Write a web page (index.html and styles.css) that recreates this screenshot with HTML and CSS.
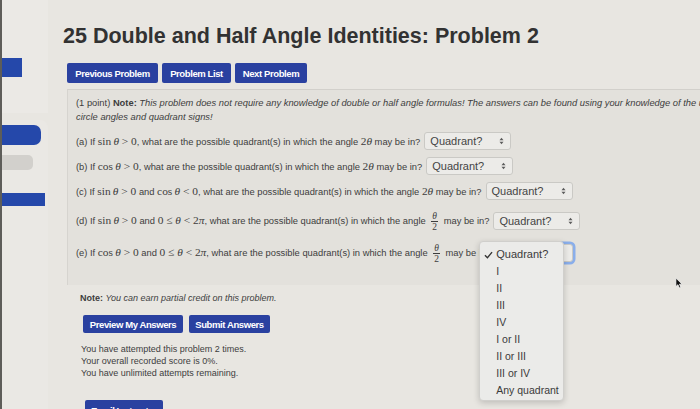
FILE: index.html
```html
<!DOCTYPE html>
<html lang="en">
<head>
<meta charset="utf-8">
<title>25 Double and Half Angle Identities: Problem 2</title>
<link rel="stylesheet" href="styles.css">
</head>
<body>
<div class="page">
  <aside class="sidebar">
    <div class="side-top"><div class="sbar blue s1"></div></div>
    <div class="side-panel">
      <div class="sbar blue s2"></div>
      <div class="sbar gray s3"></div>
      <div class="sbar blue s4"></div>
    </div>
  </aside>
  <main class="main">
    <h1 class="title">25 Double and Half Angle Identities: Problem 2</h1>
    <nav class="nav">
      <a class="btn b-prev">Previous Problem</a>
      <a class="btn b-list">Problem List</a>
      <a class="btn b-next">Next Problem</a>
    </nav>
    <section class="problem">
      <p class="intro">(1 point) <b>Note:</b> <i>This problem does not require any knowledge of double or half angle formulas! The answers can be found using your knowledge of the unit<br>circle angles and quadrant signs!</i></p>

      <div class="q"><span class="qt">(a) If <span class="m">sin&#8201;<i>θ</i> &gt; 0</span>, what are the possible quadrant(s) in which the angle <span class="m">2<i>θ</i></span> may be in?</span><span class="sel"><span>Quadrant?</span><svg class="arr" viewBox="0 0 6 10" width="5" height="8"><polygon points="0.5,4 3,0.8 5.5,4" /><polygon points="0.5,6 3,9.2 5.5,6" /></svg></span></div>

      <div class="q"><span class="qt">(b) If <span class="m">cos&#8201;<i>θ</i> &gt; 0</span>, what are the possible quadrant(s) in which the angle <span class="m">2<i>θ</i></span> may be in?</span><span class="sel"><span>Quadrant?</span><svg class="arr" viewBox="0 0 6 10" width="5" height="8"><polygon points="0.5,4 3,0.8 5.5,4" /><polygon points="0.5,6 3,9.2 5.5,6" /></svg></span></div>

      <div class="q"><span class="qt">(c) If <span class="m">sin&#8201;<i>θ</i> &gt; 0</span> and <span class="m">cos&#8201;<i>θ</i> &lt; 0</span>, what are the possible quadrant(s) in which the angle <span class="m">2<i>θ</i></span> may be in?</span><span class="sel"><span>Quadrant?</span><svg class="arr" viewBox="0 0 6 10" width="5" height="8"><polygon points="0.5,4 3,0.8 5.5,4" /><polygon points="0.5,6 3,9.2 5.5,6" /></svg></span></div>

      <div class="q tall"><span class="qt">(d) If <span class="m">sin&#8201;<i>θ</i> &gt; 0</span> and <span class="m">0 ≤ <i>θ</i> &lt; 2<i>π</i></span>, what are the possible quadrant(s) in which the angle <span class="frac"><i>θ</i><span class="den">2</span></span> may be in?</span><span class="sel"><span>Quadrant?</span><svg class="arr" viewBox="0 0 6 10" width="5" height="8"><polygon points="0.5,4 3,0.8 5.5,4" /><polygon points="0.5,6 3,9.2 5.5,6" /></svg></span></div>

      <div class="q tall"><span class="qt">(e) If <span class="m">cos&#8201;<i>θ</i> &gt; 0</span> and <span class="m">0 ≤ <i>θ</i> &lt; 2<i>π</i></span>, what are the possible quadrant(s) in which the angle <span class="frac"><i>θ</i><span class="den">2</span></span> may be in?</span><span class="sel open"><span>Quadrant?</span>
          <ul class="menu">
            <li class="checked"><svg class="check" viewBox="0 0 10 9" width="9" height="8"><path d="M1 4.8 L3.8 7.6 L9 1.2" /></svg>Quadrant?</li>
            <li>I</li>
            <li>II</li>
            <li>III</li>
            <li>IV</li>
            <li>I or II</li>
            <li>II or III</li>
            <li>III or IV</li>
            <li>Any quadrant</li>
          </ul>
        </span></div>
    </section>

    <div class="after">
      <p class="note"><b>Note:</b> <i>You can earn partial credit on this problem.</i></p>
      <div class="actions">
        <a class="btn b-preview">Preview My Answers</a>
        <a class="btn b-submit">Submit Answers</a>
      </div>
      <p class="status">You have attempted this problem 2 times.<br>Your overall recorded score is 0%.<br>You have unlimited attempts remaining.</p>
      <a class="btn b-email">Email Instructor</a>
    </div>
  </main>
</div>
<svg class="cursor" viewBox="0 0 9 13" width="8" height="12"><path d="M1 1 L1 10.5 L3.3 8.4 L5 12 L6.6 11.3 L5 7.8 L8 7.8 Z" /></svg>
</body>
</html>
```

FILE: styles.css
```css
html, body {
  margin: 0;
  padding: 0;
}

body {
  width: 700px;
  height: 409px;
  overflow: hidden;
  position: relative;
  background: #e8e6e1;
  font-family: "Liberation Sans", Arial, Helvetica, sans-serif;
  color: #3d3d3d;
}

.page {
  display: flex;
  width: 800px;
  height: 409px;
}

/* ---------- left sidebar ---------- */
.sidebar {
  width: 46px;
  flex: none;
  border-left: 2px solid #5e5d59;
  display: flex;
  flex-direction: column;
}

.side-top {
  height: 113px;
  box-sizing: border-box;
  padding-top: 58px;
  background: #ebe9e5;
}

.side-panel {
  flex: 1;
  margin-top: 7px;
  padding-top: 5px;
  background: #eae8e4;
  border-top-right-radius: 8px;
  display: flex;
  flex-direction: column;
}

.sbar.blue { background: #2548aa; }
.sbar.gray { background: #d2d0cc; }

.s1 { width: 20px; height: 19px; }
.s2 { width: 39px; height: 20px; border-radius: 0 7px 7px 0; }
.s3 { width: 31px; height: 15px; margin-top: 10px; border-radius: 0 5px 5px 0; }
.s4 { width: 43px; height: 13px; margin-top: 23px; }

/* ---------- main ---------- */
.main {
  flex: 1;
  min-width: 0;
  padding-left: 19px;
}

.title {
  margin: 22px 0 0 -4px;
  font-size: 21.5px;
  line-height: 28px;
  font-weight: bold;
  color: #323232;
}

.nav {
  display: flex;
  gap: 4px;
  margin-top: 13px;
}

.btn {
  display: flex;
  align-items: center;
  justify-content: center;
  box-sizing: border-box;
  background: #2a41a0;
  color: #ffffff;
  font-size: 9.5px;
  font-weight: bold;
  letter-spacing: -0.4px;
  border-radius: 2px;
  white-space: nowrap;
}

.b-prev { width: 91px; height: 20px; }
.b-list { width: 69px; height: 20px; }
.b-next { width: 72px; height: 20px; }

/* ---------- problem box ---------- */
.problem {
  margin-top: 6px;
  width: 740px;
  height: 196px;
  box-sizing: border-box;
  padding: 6px 0 0 8px;
  background: #e3e1dc;
  border-top: 1px solid #d2d0cb;
  border-left: 1px solid #d6d4cf;
}

.intro {
  margin: 0;
  font-size: 9.35px;
  line-height: 14px;
  white-space: nowrap;
}

.q {
  display: flex;
  align-items: center;
  height: 20px;
  margin-top: 5px;
  font-size: 9.35px;
  white-space: nowrap;
}

.intro + .q { margin-top: 7px; }

.q.tall {
  height: 24px;
  margin-top: 8px;
}

.m {
  font-family: "Liberation Serif", "Times New Roman", serif;
  font-size: 11.4px;
}

.m i, .frac i {
  font-family: "Liberation Serif", "Times New Roman", serif;
}

.frac {
  display: inline-flex;
  flex-direction: column;
  align-items: center;
  vertical-align: middle;
  margin: 0 3px;
  font-family: "Liberation Serif", "Times New Roman", serif;
  font-size: 9.5px;
  line-height: 10px;
}

.frac .den {
  border-top: 0.7px solid #3d3d3d;
  padding: 0 1px;
}

/* select look-alike */
.sel {
  display: inline-flex;
  align-items: center;
  justify-content: space-between;
  box-sizing: border-box;
  width: 87px;
  height: 18px;
  margin-left: 4px;
  padding: 0 6px 0 5px;
  background: #ecebe8;
  border: 1px solid #cac9c5;
  border-radius: 3px;
  font-size: 11px;
  color: #444444;
}

.arr polygon { fill: #5a5a5a; }

.sel.open {
  position: relative;
  width: 78px;
  box-shadow: 0 0 0 2.5px #8aaeea;
}

.menu {
  position: absolute;
  left: -17px;
  top: -4px;
  width: 85px;
  margin: 0;
  padding: 4px 0 1px;
  list-style: none;
  box-sizing: border-box;
  background: #ebebe9;
  border: 1px solid #d0cfcc;
  border-radius: 4px;
  box-shadow: 0 2px 6px rgba(0, 0, 0, 0.18);
  font-size: 10.5px;
  color: #3a3a3a;
  z-index: 2;
}

.menu li {
  position: relative;
  height: 17px;
  line-height: 17px;
  padding-left: 16px;
}

.menu li.checked { font-size: 11px; }

.check {
  position: absolute;
  left: 4px;
  top: 5px;
}

.check path {
  fill: none;
  stroke: #333333;
  stroke-width: 1.5;
}

/* ---------- below problem ---------- */
.after {
  padding-left: 13px;
}

.note {
  margin: 6px 0 0;
  font-size: 9px;
  line-height: 14px;
}

.actions {
  display: flex;
  gap: 6px;
  margin: 10px 0 0 3px;
}

.b-preview { width: 100px; height: 18px; }
.b-submit { width: 81px; height: 18px; }

.status {
  margin: 10px 0 0 1px;
  font-size: 9px;
  line-height: 12px;
}

.b-email {
  width: 78px;
  height: 20px;
  margin: 21px 0 0 5px;
}

.cursor {
  position: absolute;
  left: 675px;
  top: 277px;
}

.cursor path {
  fill: #111111;
  stroke: #ffffff;
  stroke-width: 0.8;
}
```
